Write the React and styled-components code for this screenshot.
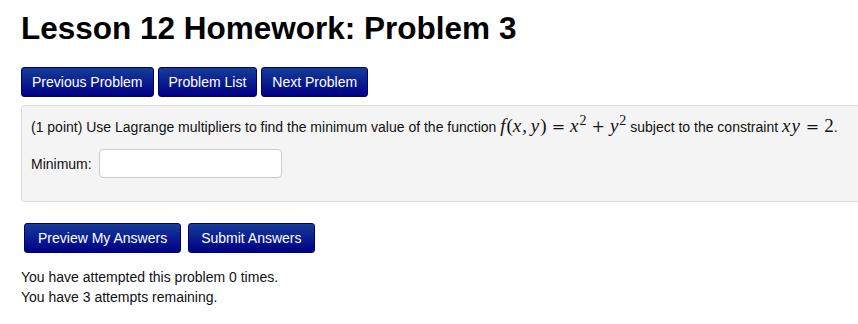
import styled, { createGlobalStyle } from "styled-components";

const GlobalStyle = createGlobalStyle`
  html, body {
    margin: 0;
    padding: 0;
    background: #fff;
    overflow: hidden;
  }
  body {
    font-family: "Liberation Sans", Arial, sans-serif;
    color: #111;
  }
`;

const Page = styled.div`
  width: 858px;
  height: 324px;
  padding: 10px 0 0 21px;
  box-sizing: border-box;
  overflow: hidden;
`;

const Title = styled.h1`
  margin: 0;
  font-size: 31.5px;
  font-weight: bold;
  line-height: 36px;
  color: #000;
`;

const NavBar = styled.div`
  display: flex;
  gap: 4px;
  margin-top: 21px;
`;

const Button = styled.button`
  height: 30px;
  padding: 0 ${(p) => p.$pad || 10}px;
  border: 1px solid #00006a;
  border-radius: 3px;
  background: linear-gradient(#163c98, #000086);
  color: #fff;
  font-family: "Liberation Sans", Arial, sans-serif;
  font-size: 14px;
  cursor: pointer;
`;

const ProblemBox = styled.div`
  margin-top: 8px;
  margin-right: -20px;
  height: 97px;
  box-sizing: border-box;
  padding: 10px 9px;
  background: #f4f4f4;
  border: 1px solid #dcdcdc;
  border-radius: 3px;
  font-size: 14px;
`;

const Statement = styled.p`
  margin: 0;
  height: 20px;
  line-height: 20px;
  white-space: nowrap;
`;

const Math = styled.span`
  font-family: "Liberation Serif", "DejaVu Serif", serif;
  font-size: 19px;
  line-height: 1;
`;

const Var = styled.i`
  font-style: italic;
  margin-right: 1px;
`;

const Sup = styled.span`
  font-size: 14px;
  position: relative;
  top: -7px;
`;

const Op = styled.span`
  font-family: "DejaVu Serif", serif;
  font-size: 16px;
  margin: 0 ${(p) => p.$space || 0}px;
`;

const AnswerRow = styled.div`
  display: flex;
  align-items: center;
  gap: 7px;
  margin-top: 13px;
`;

const Input = styled.input`
  width: 183px;
  height: 29px;
  box-sizing: border-box;
  border: 1px solid #ccc;
  border-radius: 4px;
  background: #fff;
`;

const Actions = styled.div`
  display: flex;
  gap: 7px;
  margin: 21px 0 0 3px;
`;

const Note = styled.div`
  margin-top: 14px;
  font-size: 14px;
  line-height: 20px;
`;

export default function App() {
  return (
    <Page>
      <GlobalStyle />
      <Title>Lesson 12 Homework: Problem 3</Title>
      <NavBar>
        <Button>Previous Problem</Button>
        <Button>Problem List</Button>
        <Button>Next Problem</Button>
      </NavBar>
      <ProblemBox>
        <Statement>
          (1 point) Use Lagrange multipliers to find the minimum value of the function{" "}
          <Math>
            <Var>f</Var>(<Var>x</Var>,&thinsp;<Var>y</Var>)<Op $space={5}>=</Op>
            <Var>x</Var>
            <Sup>2</Sup>
            <Op $space={5}>+</Op>
            <Var>y</Var>
            <Sup>2</Sup>
          </Math>{" "}
          subject to the constraint{" "}
          <Math>
            <Var>x</Var>
            <Var>y</Var>
            <Op $space={5}>=</Op>2
          </Math>
          .
        </Statement>
        <AnswerRow>
          Minimum:
          <Input type="text" />
        </AnswerRow>
      </ProblemBox>
      <Actions>
        <Button $pad={13}>Preview My Answers</Button>
        <Button $pad={12}>Submit Answers</Button>
      </Actions>
      <Note>
        You have attempted this problem 0 times.
        <br />
        You have 3 attempts remaining.
      </Note>
    </Page>
  );
}
